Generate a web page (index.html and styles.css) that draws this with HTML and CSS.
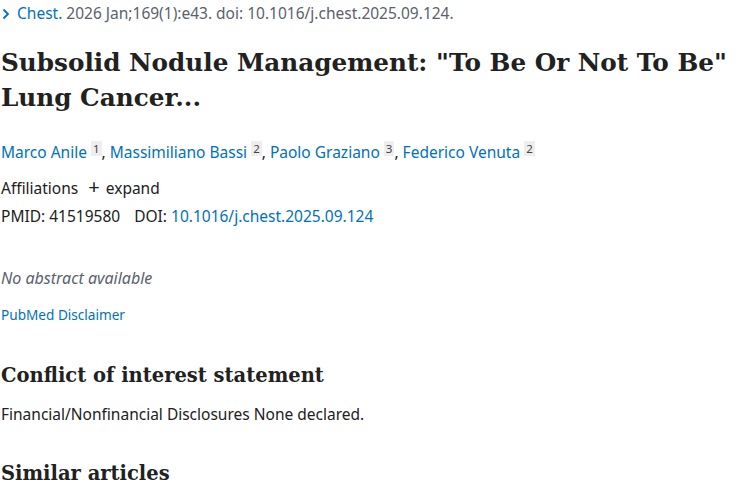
FILE: index.html
```html
<!DOCTYPE html>
<html lang="en">
<head>
    <meta charset="UTF-8">
    <title>Subsolid Nodule Management</title>
    <link rel="stylesheet" href="styles.css">
</head>
<body>
    <div class="article">
        <div class="citation">
            <svg class="chevron" width="10" height="12" viewBox="0 0 10 12"><path d="M2.5 1.5 L7 6 L2.5 10.5" fill="none" stroke="#0071bc" stroke-width="1.8"/></svg>
            <a href="#">Chest.</a> 2026 Jan;169(1):e43. doi: 10.1016/j.chest.2025.09.124.
        </div>

        <h1 class="title">Subsolid Nodule Management: "To Be Or Not To Be" Lung Cancer...</h1>

        <div class="authors">
            <a href="#">Marco Anile</a> <sup>1</sup>,
            <a href="#">Massimiliano Bassi</a> <sup>2</sup>,
            <a href="#">Paolo Graziano</a> <sup>3</sup>,
            <a href="#">Federico Venuta</a> <sup>2</sup>
        </div>

        <div class="affiliations">Affiliations <span class="expand"><span class="plus">+</span> expand</span></div>
        <div class="ids">PMID: 41519580 <span class="doi">DOI: <a href="#">10.1016/j.chest.2025.09.124</a></span></div>

        <p class="no-abstract">No abstract available</p>
        <a class="disclaimer" href="#">PubMed Disclaimer</a>

        <h2>Conflict of interest statement</h2>
        <p class="coi">Financial/Nonfinancial Disclosures None declared.</p>

        <h2 class="similar">Similar articles</h2>
    </div>
</body>
</html>
```

FILE: styles.css
```css
body {
    margin: 0;
    font-family: "Noto Sans", sans-serif;
    font-size: 15.5px;
    color: #212121;
    background: #fff;
}

a {
    color: #0071bc;
    text-decoration: none;
}

.article {
    padding: 0 0 0 1px;
}

.citation {
    font-size: 15.5px;
    color: #5b616b;
    line-height: 18px;
    padding-top: 4px;
}

.chevron {
    vertical-align: -1px;
    margin-right: 2px;
}

.title {
    font-family: "DejaVu Serif", serif;
    font-size: 24.7px;
    line-height: 35px;
    font-weight: bold;
    color: #212121;
    margin: 23px 0 0 0;
    width: 740px;
}

.authors {
    margin-top: 23px;
    line-height: 22px;
}

.authors sup {
    font-size: 11.5px;
    background: #eeeeee;
    color: #444;
    padding: 0 2px;
    vertical-align: 5px;
}

.affiliations {
    margin-top: 14px;
    line-height: 22px;
}

.expand {
    margin-left: 6px;
}

.plus {
    font-size: 20px;
    line-height: 1;
    margin-right: 2px;
}

.ids {
    line-height: 22px;
    margin-top: 6px;
}

.doi {
    margin-left: 10px;
}

.no-abstract {
    font-style: italic;
    color: #5b616b;
    font-size: 16px;
    margin: 40px 0 0 0;
}

.disclaimer {
    display: block;
    font-size: 13.6px;
    margin-top: 16px;
}

h2 {
    font-family: "DejaVu Serif", serif;
    font-size: 19.5px;
    font-weight: bold;
    margin: 40px 0 0 0;
}

.coi {
    margin: 16px 0 0 0;
}

h2.similar {
    margin-top: 37px;
}
```
